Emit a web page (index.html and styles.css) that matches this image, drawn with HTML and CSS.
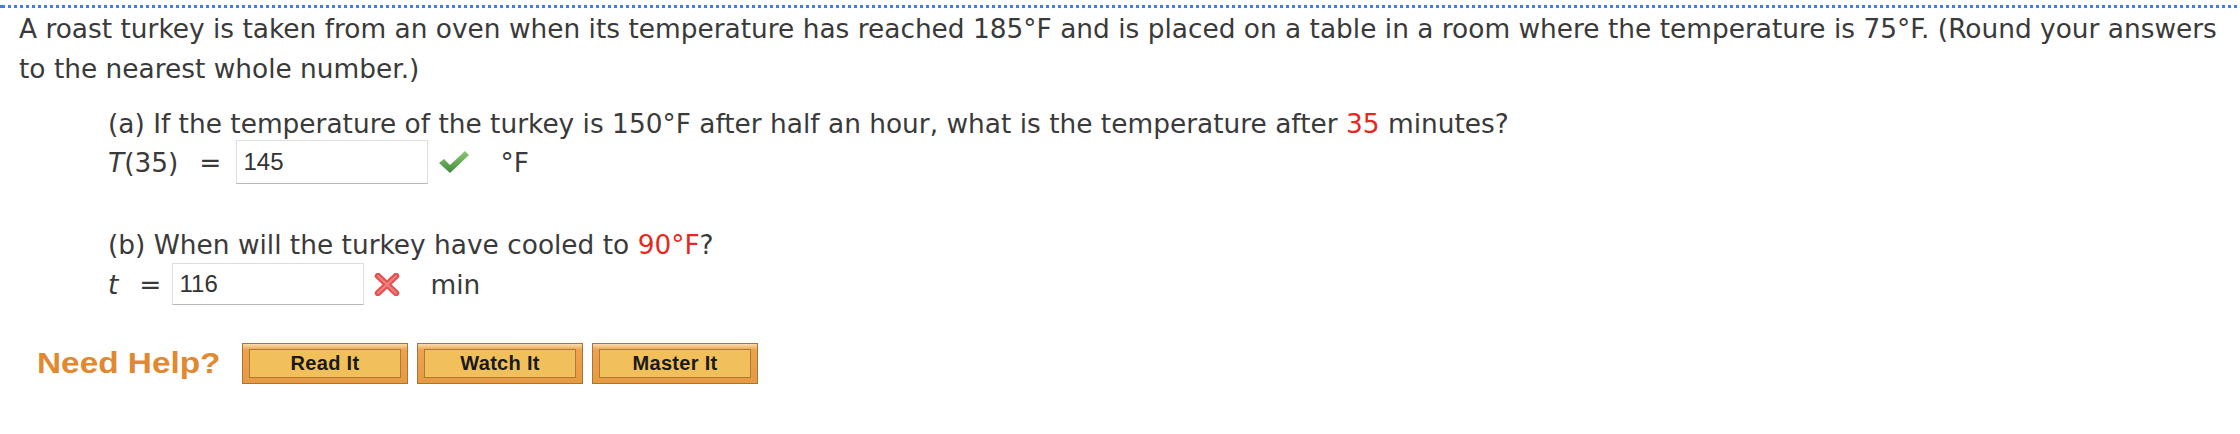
FILE: index.html
```html
<!DOCTYPE html>
<html lang="en">
<head>
<meta charset="utf-8">
<title>Roast turkey</title>
<link rel="stylesheet" href="styles.css">
</head>
<body>
<div class="rule"></div>
<div class="question">
  <p class="intro">A roast turkey is taken from an oven when its temperature has reached 185°F and is placed on a table in a room where the temperature is 75°F. (Round your answers to the nearest whole number.)</p>

  <div class="part part-a">
    <p class="prompt">(a) If the temperature of the turkey is 150°F after half an hour, what is the temperature after <span class="red">35</span> minutes?</p>
    <div class="answer">
      <span class="label"><i>T</i>(35)</span><span class="eq">=</span>
      <span class="field">145</span>
      <svg class="mark check" width="32" height="24" viewBox="0 0 32 24" aria-hidden="true">
        <defs>
          <linearGradient id="g" x1="0" y1="0" x2="0" y2="1">
            <stop offset="0" stop-color="#8fc97a"/>
            <stop offset="1" stop-color="#3f8a3a"/>
          </linearGradient>
        </defs>
        <path d="M1 13 L6 9 L12 15 L27 1 L31 5 L12 23 Z" fill="url(#g)"/>
      </svg>
      <span class="unit">°F</span>
    </div>
  </div>

  <div class="part part-b">
    <p class="prompt">(b) When will the turkey have cooled to <span class="red">90°F</span>?</p>
    <div class="answer">
      <span class="label"><i>t</i></span><span class="eq">=</span>
      <span class="field">116</span>
      <svg class="mark cross" width="26" height="23" viewBox="0 0 26 23" aria-hidden="true">
        <path d="M4 3 L22 20 M22 3 L4 20" stroke="#e25454" stroke-width="6.5" stroke-linecap="round"/>
        <path d="M4 3 L22 20 M22 3 L4 20" stroke="#f08080" stroke-width="2" stroke-linecap="round"/>
      </svg>
      <span class="unit">min</span>
    </div>
  </div>

  <div class="help">
    <span class="need"><span class="need-text">Need Help?</span></span>
    <span class="btn"><span class="btn-in">Read It</span></span>
    <span class="btn"><span class="btn-in">Watch It</span></span>
    <span class="btn"><span class="btn-in">Master It</span></span>
  </div>
</div>
</body>
</html>
```
FILE: styles.css
```css
html, body {
  margin: 0;
  padding: 0;
  background: #ffffff;
}

body {
  font-family: "DejaVu Sans", Verdana, sans-serif;
  color: #3a3a3a;
}

.rule {
  height: 3px;
  margin-top: 5px;
  background: repeating-linear-gradient(to right, #3f80e0 0 3px, transparent 3px 6px);
  background-position: 2px 0;
}

.question {
  padding-left: 19px;
}

.intro {
  margin: 1px 0 0;
  font-size: 26.4px;
  line-height: 40px;
  max-width: 2215px;
}

.part {
  padding-left: 89px;
}

.part-a {
  margin-top: 18px;
}

.part-b {
  margin-top: 44px;
}

.prompt {
  margin: 0;
  font-size: 26.4px;
  line-height: 34px;
}

.red {
  color: #e8281e;
}

.answer {
  display: flex;
  align-items: center;
  margin-top: -1px;
  font-size: 26.4px;
}

.part-b .answer {
  margin-top: 1px;
}

.label {
  white-space: nowrap;
}

.eq {
  margin-left: 21px;
  margin-right: 15px;
}

.part-b .eq {
  margin-right: 11px;
}

.field {
  box-sizing: border-box;
  width: 192px;
  height: 44px;
  padding: 0 6px;
  display: flex;
  align-items: center;
  border: 1px solid #dddddd;
  border-bottom-color: #b8b8b8;
  font-family: "Liberation Sans", Arial, sans-serif;
  font-size: 24px;
  color: #333333;
}

.part-b .field {
  height: 42px;
}

.mark {
  margin-left: 10px;
  margin-right: 30px;
}

.help {
  display: flex;
  align-items: center;
  margin-top: 38px;
  padding-left: 18px;
}

.need {
  width: 185px;
  margin-right: 20px;
  white-space: nowrap;
}

.need-text {
  display: inline-block;
  font-family: "Liberation Sans", Arial, sans-serif;
  font-weight: bold;
  font-size: 29px;
  color: #e2882f;
  transform: scaleX(1.15);
  transform-origin: left center;
}

.btn {
  box-sizing: border-box;
  width: 166px;
  height: 41px;
  margin-right: 9px;
  padding: 5px 6px 5px 6px;
  border: 1px solid #a8743a;
  background: linear-gradient(to bottom, #f9dcae 0, #eea24c 6px, #e89a40 100%);
  display: flex;
}

.btn-in {
  flex: 1;
  display: flex;
  align-items: center;
  justify-content: center;
  border: 1px solid #a97a40;
  background: #f2c05a;
  font-family: "Liberation Sans", Arial, sans-serif;
  font-weight: bold;
  font-size: 20px;
  letter-spacing: 0.3px;
  color: #1a1a1a;
}
```
